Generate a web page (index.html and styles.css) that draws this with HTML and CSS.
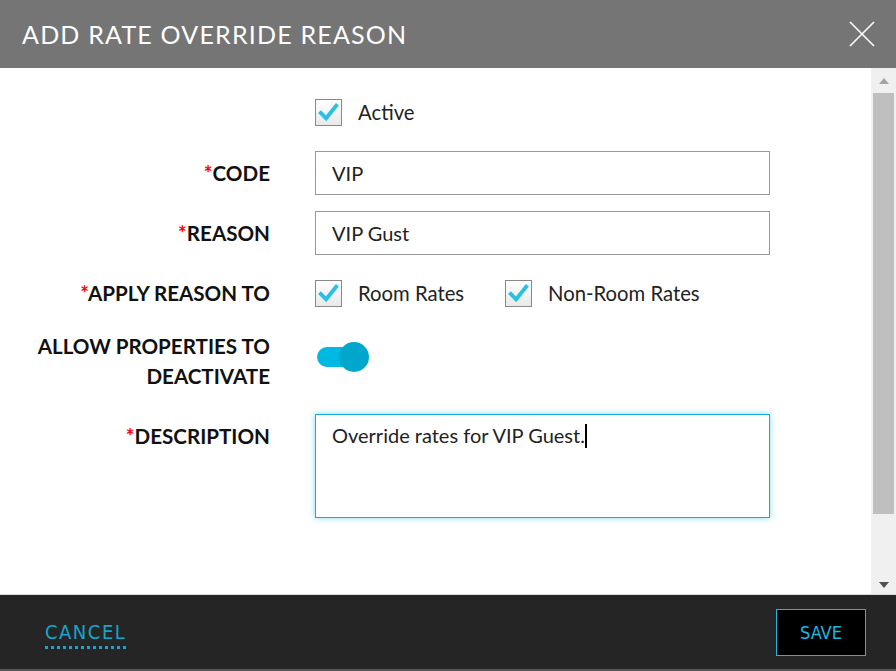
FILE: index.html
```html
<!DOCTYPE html>
<html lang="en">
<head>
<meta charset="utf-8">
<title>Add Rate Override Reason</title>
<link rel="stylesheet" href="styles.css">
</head>
<body>
<div class="dialog">
  <header class="dialog-header">
    <h1 class="dialog-title">ADD RATE OVERRIDE REASON</h1>
    <button class="close-btn" aria-label="Close">
      <svg width="26" height="26" viewBox="0 0 26 26"><path d="M1 1 L25 25 M25 1 L1 25" stroke="#fff" stroke-width="1.6" fill="none"/></svg>
    </button>
  </header>

  <div class="dialog-body">
    <div class="form">
      <div class="row row-active">
        <div class="label"></div>
        <div class="field">
          <label class="check"><span class="box"><svg viewBox="0 0 26 26"><path d="M5 13.5 L10.5 19 L21 6" stroke="#2bbfe6" stroke-width="4" fill="none" stroke-linecap="square"/></svg></span><span class="check-text">Active</span></label>
        </div>
      </div>

      <div class="row row-code">
        <div class="label"><span class="req">*</span>CODE</div>
        <div class="field"><div class="input">VIP</div></div>
      </div>

      <div class="row row-reason">
        <div class="label"><span class="req">*</span>REASON</div>
        <div class="field"><div class="input">VIP Gust</div></div>
      </div>

      <div class="row row-apply">
        <div class="label"><span class="req">*</span>APPLY REASON TO</div>
        <div class="field checks">
          <label class="check check-room"><span class="box"><svg viewBox="0 0 26 26"><path d="M5 13.5 L10.5 19 L21 6" stroke="#2bbfe6" stroke-width="4" fill="none" stroke-linecap="square"/></svg></span><span class="check-text">Room Rates</span></label>
          <label class="check"><span class="box"><svg viewBox="0 0 26 26"><path d="M5 13.5 L10.5 19 L21 6" stroke="#2bbfe6" stroke-width="4" fill="none" stroke-linecap="square"/></svg></span><span class="check-text">Non-Room Rates</span></label>
        </div>
      </div>

      <div class="row row-toggle">
        <div class="label">ALLOW PROPERTIES TO<br>DEACTIVATE</div>
        <div class="field"><span class="toggle"><span class="knob"></span></span></div>
      </div>

      <div class="row row-desc">
        <div class="label"><span class="req">*</span>DESCRIPTION</div>
        <div class="field"><div class="textarea">Override rates for VIP Guest.<span class="caret"></span></div></div>
      </div>
    </div>

    <div class="scrollbar">
      <span class="arrow up"></span>
      <div class="track"><div class="thumb"></div></div>
      <span class="arrow down"></span>
    </div>
  </div>

  <footer class="dialog-footer">
    <a class="cancel">CANCEL</a>
    <button class="save">SAVE</button>
  </footer>
</div>
</body>
</html>
```
FILE: styles.css
```css
* { box-sizing: border-box; }
html, body { margin: 0; padding: 0; }
body {
  width: 896px;
  height: 671px;
  overflow: hidden;
  font-family: Lato, "Open Sans", sans-serif;
  color: #1a1a1a;
}
.dialog {
  width: 896px;
  height: 671px;
  display: flex;
  flex-direction: column;
}
.dialog-header {
  height: 68px;
  background: #757575;
  display: flex;
  align-items: center;
  justify-content: space-between;
  padding: 0 22px 0 22px;
}
.dialog-title {
  margin: 0;
  color: #fff;
  font-family: Lato, sans-serif;
  font-weight: 400;
  font-size: 25px;
  letter-spacing: 1.2px;
}
.close-btn {
  background: none;
  border: 0;
  padding: 0;
  width: 26px;
  height: 26px;
  margin-right: -1px;
  display: flex;
}
.dialog-body {
  flex: 1;
  display: flex;
  background: #fff;
  border-bottom: 1px solid #d8d8d8;
}
.form {
  flex: 1;
  padding-top: 31px;
}
.row {
  display: flex;
  align-items: center;
}
.row-active { height: 28px; margin-bottom: 24px; }
.row-code { height: 44px; margin-bottom: 16px; }
.row-reason { height: 44px; margin-bottom: 24px; }
.row-apply { height: 28px; margin-bottom: 24px; }
.row-toggle { align-items: flex-start; height: 60px; margin-bottom: 23px; }
.row-desc { align-items: flex-start; }

.label {
  width: 270px;
  text-align: right;
  font-weight: 700;
  font-size: 20.6px;
  line-height: 30px;
  color: #111;
}
.req { color: #f00; font-weight: 700; }
.field {
  margin-left: 45px;
  width: 455px;
}
.input {
  height: 44px;
  border: 1px solid #999;
  padding: 0 16px;
  font-size: 20px;
  line-height: 42px;
  color: #222;
}
.checks { display: flex; }
.check {
  display: inline-flex;
  align-items: center;
  font-size: 20.3px;
  color: #222;
}
.check-room { width: 190px; }
.box {
  width: 27px;
  height: 27px;
  border: 1px solid #888;
  background: linear-gradient(#ffffff, #e9e9e9);
  display: inline-flex;
}
.box svg { width: 25px; height: 25px; }
.check-text { margin-left: 16px; }
.row-toggle .field { padding-top: 16px; }
.toggle {
  position: relative;
  display: block;
  width: 44px;
  height: 20px;
  margin-left: 2px;
  border-radius: 10px;
  background: #00b9e2;
}
.knob {
  position: absolute;
  left: 22px;
  top: -5px;
  width: 30px;
  height: 30px;
  border-radius: 50%;
  background: #00a6cc;
}
.row-desc .label { margin-top: 7px; }
.textarea {
  height: 104px;
  border: 1px solid #1aa9cf;
  box-shadow: 0 0 6px rgba(26, 190, 230, 0.55);
  padding: 6px 16px;
  font-size: 20px;
  line-height: 28px;
  color: #222;
}
.caret {
  display: inline-block;
  width: 2px;
  height: 24px;
  background: #000;
  vertical-align: -5px;
}
.scrollbar {
  width: 25px;
  background: #f0f0f0;
  display: flex;
  flex-direction: column;
  align-items: center;
  padding: 10px 0 6px;
}
.track { flex: 1; width: 100%; padding: 9px 2px 68px; display: flex; }
.thumb { flex: 1; background: #bfbfbf; }
.arrow { width: 0; height: 0; border-left: 5px solid transparent; border-right: 5px solid transparent; }
.arrow.up { border-bottom: 6px solid #a3a3a3; }
.arrow.down { border-top: 6px solid #505050; }
.dialog-footer {
  height: 76px;
  background: #252525;
  border-bottom: 2px solid #555;
  display: flex;
  align-items: center;
  justify-content: space-between;
  padding: 0 30px 0 45px;
}
.cancel {
  font-family: "DejaVu Sans", sans-serif;
  font-stretch: condensed;
  font-size: 20px;
  letter-spacing: 1.5px;
  color: #14a6cc;
  border-bottom: 3px dotted #14a6cc;
  padding-bottom: 2px;
  margin-top: 4px;
}
.save {
  width: 90px;
  height: 47px;
  background: #000;
  border: 1px solid #1ab9e2;
  color: #1ab9e2;
  font-family: "DejaVu Sans", sans-serif;
  font-stretch: condensed;
  font-size: 18px;
  padding: 0;
}
```
